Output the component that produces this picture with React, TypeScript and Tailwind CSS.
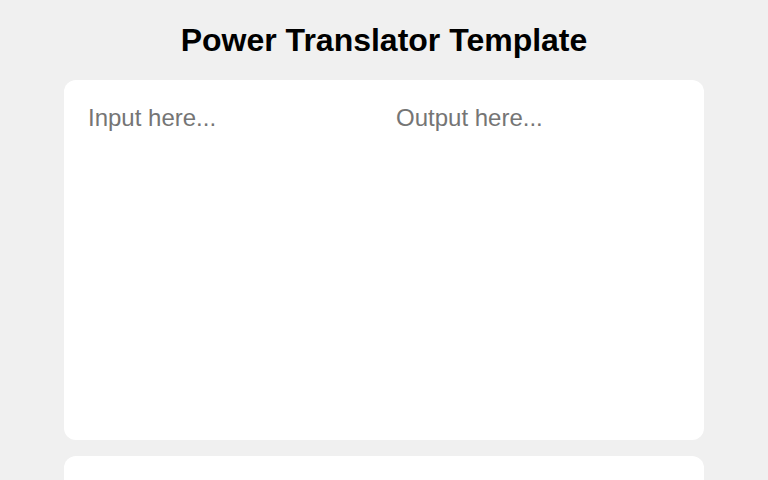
import { useState } from 'react';

export default function App() {
  const [input, setInput] = useState('');
  const [output, setOutput] = useState('');

  return (
    <div
      className="min-h-screen bg-[#f0f0f0] px-16 pt-4 pb-8"
      style={{ fontFamily: '"Liberation Sans", Arial, sans-serif' }}
    >
      {/* Title */}
      <h1 className="text-center text-[32px] leading-[48px] font-bold text-black">
        Power Translator Template
      </h1>

      {/* Translator card */}
      <div className="mt-4 h-[360px] rounded-xl bg-white p-6">
        <div className="grid h-full grid-cols-2 gap-6">
          <textarea
            value={input}
            onChange={(e) => setInput(e.target.value)}
            placeholder="Input here..."
            className="h-full w-full resize-none bg-transparent text-2xl leading-[1.2] text-gray-900 outline-none placeholder:text-[#757575]"
          />
          <textarea
            value={output}
            onChange={(e) => setOutput(e.target.value)}
            placeholder="Output here..."
            className="h-full w-full resize-none bg-transparent text-2xl leading-[1.2] text-gray-900 outline-none placeholder:text-[#757575]"
          />
        </div>
      </div>

      {/* Options card */}
      <div className="mt-4 h-[200px] rounded-xl bg-white p-6"></div>
    </div>
  );
}
